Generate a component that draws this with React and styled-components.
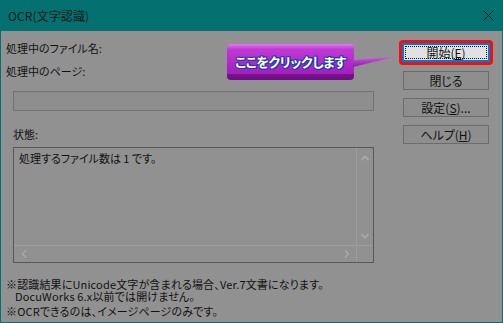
import React from "react";
import styled, { createGlobalStyle } from "styled-components";

const GlobalStyle = createGlobalStyle`
  html, body {
    margin: 0;
    padding: 0;
    background: #919191;
  }
  body {
    font-family: "Noto Sans CJK JP", "Liberation Sans", sans-serif;
    font-feature-settings: "palt";
    color: #111;
  }
`;

const Window = styled.div`
  width: 503px;
  height: 323px;
  box-sizing: border-box;
  border: 1px solid #04706f;
  border-top: none;
  display: flex;
  flex-direction: column;
  background: #919191;
  overflow: hidden;
`;

const TitleBar = styled.div`
  height: 31px;
  flex: none;
  margin: 0 -1px;
  background: #04706f;
  display: flex;
  align-items: center;
  justify-content: space-between;
  padding: 0 9px 0 8px;
`;

const Title = styled.span`
  font-size: 12px;
  color: #0b1c1c;
  letter-spacing: 0.1px;
`;

const Body = styled.div`
  position: relative;
  flex: 1;
  display: grid;
  grid-template-columns: 368px 86px;
  grid-template-rows: auto auto;
  column-gap: 29px;
  padding: 10px 0 0 5px;
`;

const LeftCol = styled.div`
  display: flex;
  flex-direction: column;
`;

const Label = styled.div`
  font-size: 11px;
  line-height: 14px;
  height: 14px;
  margin-left: ${(p) => p.$indent || 0}px;
  margin-top: ${(p) => p.$top || 0}px;
  white-space: nowrap;
`;

const Progress = styled.div`
  margin: 13px 0 0 7px;
  height: 20px;
  box-sizing: border-box;
  border: 1px solid #727272;
  background: #8e8e8e;
`;

const StatusBox = styled.div`
  margin: 6px 0 0 7px;
  height: 116px;
  box-sizing: border-box;
  border: 1px solid #585858;
  display: grid;
  grid-template-columns: 1fr 17px;
  grid-template-rows: 1fr 17px;
`;

const StatusText = styled.div`
  font-size: 11px;
  line-height: 14px;
  padding: 3px 5px;
  white-space: nowrap;
`;

const VScroll = styled.div`
  border-left: 1px solid #9d9d9d;
  display: flex;
  flex-direction: column;
  justify-content: space-between;
  align-items: center;
  padding: 7px 0 6px;
`;

const HScroll = styled.div`
  border-top: 1px solid #9d9d9d;
  display: flex;
  justify-content: space-between;
  align-items: center;
  padding: 0 6px 0 7px;
`;

const Corner = styled.div`
  border-top: 1px solid #9d9d9d;
  border-left: 1px solid #9d9d9d;
`;

const RightCol = styled.div`
  display: flex;
  flex-direction: column;
  gap: 8px;
  margin-top: 2px;
`;

const Highlight = styled.div`
  margin: -3px -4px -2px -4px;
  border: 3px solid #f01010;
  border-radius: 4px;
  padding: 0;
`;

const Button = styled.div`
  height: 19px;
  box-sizing: border-box;
  border: 1px solid ${(p) => (p.$primary ? "#0078d7" : "#6c6c6c")};
  box-shadow: ${(p) => (p.$primary ? "inset 0 0 0 1px #0078d7" : "none")};
  background: ${(p) => (p.$primary ? "#e1e1e1" : "#8e8e8e")};
  font-size: 12px;
  line-height: 17px;
  text-align: center;
  position: relative;
  white-space: nowrap;
`;

const Focus = styled.span`
  position: absolute;
  inset: 2px;
  border: 1px dotted #111;
  pointer-events: none;
`;

const Key = styled.span`
  text-decoration: underline;
  text-underline-offset: 1px;
`;

const Notes = styled.div`
  grid-column: 1 / -1;
  margin-top: 10px;
  font-size: 11px;
  line-height: 12px;
  white-space: nowrap;
`;

const NoteLine = styled.div`
  margin-left: ${(p) => p.$indent || 0}px;
  margin-top: ${(p) => p.$top || 0}px;
  letter-spacing: 0.15px;
`;

const Callout = styled.div`
  position: absolute;
  left: 226px;
  top: 13px;
  width: 127px;
  height: 36px;
  box-sizing: border-box;
  border-radius: 4px;
  background: linear-gradient(
    to bottom,
    #e27cf0 0%,
    #c23ad6 14%,
    #b22ac8 50%,
    #a31fbb 82%,
    #7c1192 84%,
    #6a0d80 100%
  );
  display: flex;
  align-items: center;
  justify-content: center;
  padding-bottom: 5px;
  padding-top: 3px;
`;

const CalloutText = styled.span`
  font-size: 13px;
  font-weight: 700;
  color: #fff;
  letter-spacing: -0.4px;
  text-shadow: 1px 0 0 #1d3aa8, -1px 0 0 #1d3aa8, 0 1px 0 #1d3aa8,
    0 -1px 0 #1d3aa8, 1px 1px 0 #1d3aa8, -1px -1px 0 #1d3aa8,
    1px -1px 0 #1d3aa8, -1px 1px 0 #1d3aa8;
`;

const Tail = styled.svg`
  position: absolute;
  left: 352px;
  top: 25px;
`;

const Chevron = ({ dir }) => {
  const pts = {
    up: "0.5,5 4,1.5 7.5,5",
    down: "0.5,1 4,4.5 7.5,1",
    left: "5,0.5 1.5,4 5,7.5",
    right: "1,0.5 4.5,4 1,7.5",
  }[dir];
  const vertical = dir === "up" || dir === "down";
  return (
    <svg width={vertical ? 8 : 6} height={vertical ? 6 : 8}>
      <polyline points={pts} fill="none" stroke="#a9a9a9" strokeWidth="1.6" />
    </svg>
  );
};

export default function App() {
  return (
    <>
      <GlobalStyle />
      <Window>
        <TitleBar>
          <Title>OCR(文字認識)</Title>
          <svg width="11" height="11" viewBox="0 0 11 11">
            <path d="M0.5 0.5 L10.5 10.5 M10.5 0.5 L0.5 10.5" stroke="#0b1c1c" strokeWidth="1" />
          </svg>
        </TitleBar>
        <Body>
          <LeftCol>
            <Label>処理中のファイル名:</Label>
            <Label $top={9}>処理中のページ:</Label>
            <Progress />
            <Label $indent={7} $top={16}>状態:</Label>
            <StatusBox>
              <StatusText>処理するファイル数は 1 です。</StatusText>
              <VScroll>
                <Chevron dir="up" />
                <Chevron dir="down" />
              </VScroll>
              <HScroll>
                <Chevron dir="left" />
                <Chevron dir="right" />
              </HScroll>
              <Corner />
            </StatusBox>
          </LeftCol>
          <RightCol>
            <Highlight>
              <Button $primary>
                開始(<Key>E</Key>)
                <Focus />
              </Button>
            </Highlight>
            <Button>閉じる</Button>
            <Button>
              設定(<Key>S</Key>)...
            </Button>
            <Button>
              ヘルプ(<Key>H</Key>)
            </Button>
          </RightCol>
          <Notes>
            <NoteLine>※認識結果にUnicode文字が含まれる場合、Ver.7文書になります。</NoteLine>
            <NoteLine $indent={9}>DocuWorks 6.x以前では開けません。</NoteLine>
            <NoteLine $top={3}>※OCRできるのは、イメージページのみです。</NoteLine>
          </Notes>
          <Callout>
            <CalloutText>ここをクリックします</CalloutText>
          </Callout>
          <Tail width="42" height="12" viewBox="0 0 42 12">
            <defs>
              <linearGradient id="tailGrad" x1="0" y1="0" x2="0" y2="1">
                <stop offset="0" stopColor="#d055e6" />
                <stop offset="1" stopColor="#8a1aa2" />
              </linearGradient>
            </defs>
            <polygon points="0,4 41,1 0,11" fill="url(#tailGrad)" />
          </Tail>
        </Body>
      </Window>
    </>
  );
}
